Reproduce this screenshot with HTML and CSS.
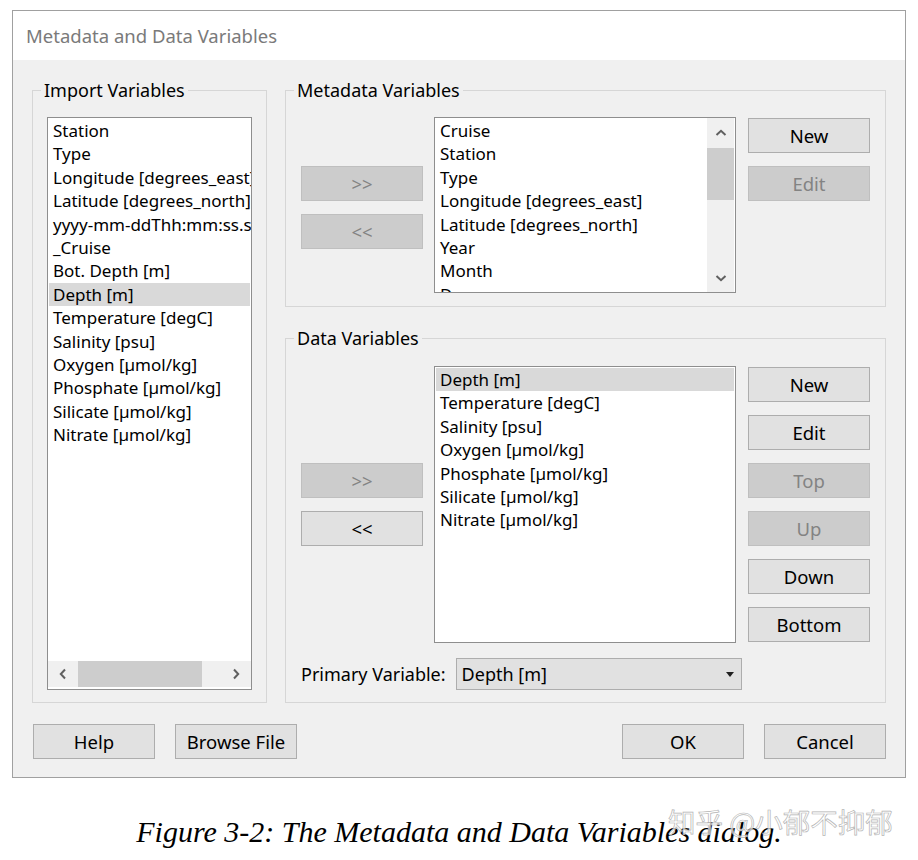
FILE: index.html
```html
<!DOCTYPE html>
<html lang="en">
<head>
  <meta charset="UTF-8">
  <meta name="viewport" content="width=device-width, initial-scale=1.0">
  <title>Metadata and Data Variables</title>
  <link rel="stylesheet" href="styles.css">
</head>
<body>
  <div class="dialog">
    <div class="titlebar">Metadata and Data Variables</div>
    <div class="dialog-body">
      <div class="main">
        <div class="group import-group">
          <span class="group-title">Import Variables</span>
          <div class="listbox import-list">
            <ul class="items">
              <li>Station</li>
              <li>Type</li>
              <li>Longitude [degrees_east]</li>
              <li>Latitude [degrees_north]</li>
              <li>yyyy-mm-ddThh:mm:ss.sss</li>
              <li>_Cruise</li>
              <li>Bot. Depth [m]</li>
              <li class="selected">Depth [m]</li>
              <li>Temperature [degC]</li>
              <li>Salinity [psu]</li>
              <li>Oxygen [µmol/kg]</li>
              <li>Phosphate [µmol/kg]</li>
              <li>Silicate [µmol/kg]</li>
              <li>Nitrate [µmol/kg]</li>
            </ul>
            <div class="hscroll">
              <span class="arrow-box">
                <svg width="8" height="12" viewBox="0 0 8 12"><path d="M6 1.5 L1.8 6 L6 10.5" fill="none" stroke="#606060" stroke-width="2"/></svg>
              </span>
              <span class="hthumb"></span>
              <span class="track-fill"></span>
              <span class="arrow-box">
                <svg width="8" height="12" viewBox="0 0 8 12"><path d="M2 1.5 L6.2 6 L2 10.5" fill="none" stroke="#606060" stroke-width="2"/></svg>
              </span>
            </div>
          </div>
        </div>

        <div class="right-col">
          <div class="group meta-group">
            <span class="group-title">Metadata Variables</span>
            <div class="transfer meta-transfer">
              <button class="btn" disabled>&gt;&gt;</button>
              <button class="btn" disabled>&lt;&lt;</button>
            </div>
            <div class="listbox meta-list">
              <ul class="items">
                <li>Cruise</li>
                <li>Station</li>
                <li>Type</li>
                <li>Longitude [degrees_east]</li>
                <li>Latitude [degrees_north]</li>
                <li>Year</li>
                <li>Month</li>
                <li>Day</li>
              </ul>
              <div class="vscroll">
                <span class="arrow-box">
                  <svg width="12" height="8" viewBox="0 0 12 8"><path d="M1.5 6 L6 1.8 L10.5 6" fill="none" stroke="#606060" stroke-width="2"/></svg>
                </span>
                <span class="vthumb"></span>
                <span class="track-fill"></span>
                <span class="arrow-box">
                  <svg width="12" height="8" viewBox="0 0 12 8"><path d="M1.5 2 L6 6.2 L10.5 2" fill="none" stroke="#606060" stroke-width="2"/></svg>
                </span>
              </div>
            </div>
            <div class="side-buttons">
              <button class="btn">New</button>
              <button class="btn" disabled>Edit</button>
            </div>
          </div>

          <div class="group data-group">
            <span class="group-title">Data Variables</span>
            <div class="data-row">
              <div class="transfer data-transfer">
                <button class="btn" disabled>&gt;&gt;</button>
                <button class="btn">&lt;&lt;</button>
              </div>
              <div class="listbox data-list">
                <ul class="items">
                  <li class="selected">Depth [m]</li>
                  <li>Temperature [degC]</li>
                  <li>Salinity [psu]</li>
                  <li>Oxygen [µmol/kg]</li>
                  <li>Phosphate [µmol/kg]</li>
                  <li>Silicate [µmol/kg]</li>
                  <li>Nitrate [µmol/kg]</li>
                </ul>
              </div>
              <div class="side-buttons">
                <button class="btn">New</button>
                <button class="btn">Edit</button>
                <button class="btn" disabled>Top</button>
                <button class="btn" disabled>Up</button>
                <button class="btn">Down</button>
                <button class="btn">Bottom</button>
              </div>
            </div>
            <div class="primary-row">
              <span class="primary-label">Primary Variable:</span>
              <div class="combo">
                <span>Depth [m]</span>
                <svg width="8" height="5" viewBox="0 0 8 5"><path d="M0 0 H8 L4 5 Z" fill="#202020"/></svg>
              </div>
            </div>
          </div>
        </div>
      </div>

      <div class="footer">
        <button class="btn help-btn">Help</button>
        <button class="btn">Browse File</button>
        <span class="spacer"></span>
        <button class="btn">OK</button>
        <button class="btn">Cancel</button>
      </div>
    </div>
  </div>

  <p class="caption">Figure 3-2: The Metadata and Data Variables dialog.<span class="watermark">知乎 @小郁不抑郁</span></p>
</body>
</html>
```

FILE: styles.css
```css
* {
  box-sizing: border-box;
}
body {
  margin: 0;
  background-color: #fff;
  font-family: "Noto Sans", "Open Sans", Arial, sans-serif;
  color: #000;
}
.dialog {
  width: 894px;
  height: 768px;
  margin: 10px 0 0 12px;
  border: 1px solid #a0a0a0;
  display: flex;
  flex-direction: column;
}
.titlebar {
  height: 49px;
  line-height: 49px;
  padding-left: 13px;
  background-color: #fff;
  color: #7a7a7a;
  font-size: 18.5px;
}
.dialog-body {
  flex: 1;
  background-color: #f0f0f0;
  padding: 30px 19px 0 19px;
}
.main {
  display: flex;
  gap: 18px;
}
.group {
  position: relative;
  border: 1px solid #d6d6d6;
}
.group-title {
  position: absolute;
  top: -13px;
  left: 8px;
  padding: 0 3px;
  background-color: #f0f0f0;
  font-size: 18px;
  line-height: 24px;
}
.import-group {
  width: 235px;
  height: 613px;
  padding: 26px 14px 12px;
}
.right-col {
  width: 601px;
  display: flex;
  flex-direction: column;
  gap: 31px;
}
.meta-group {
  height: 217px;
  padding: 26px 15px 13px;
  display: flex;
}
.data-group {
  height: 365px;
  padding: 27px 15px 12px;
}
.data-row {
  display: flex;
}

/* buttons */
.btn {
  width: 122px;
  height: 35px;
  padding: 0;
  background-color: #e1e1e1;
  border: 1px solid #adadad;
  font-family: inherit;
  font-size: 18.5px;
  color: #000;
}
.btn:disabled {
  background-color: #cccccc;
  border-color: #bfbfbf;
  color: #838383;
}
.transfer {
  display: flex;
  flex-direction: column;
  gap: 13px;
  margin-right: 11px;
}
.meta-transfer {
  padding-top: 49px;
}
.data-transfer {
  padding-top: 97px;
}
.side-buttons {
  display: flex;
  flex-direction: column;
  gap: 13px;
  margin-left: 12px;
  padding-top: 1px;
}

/* list boxes */
.listbox {
  background-color: #fff;
  border: 1px solid #8e8e8e;
  display: flex;
  overflow: hidden;
}
.import-list {
  width: 205px;
  height: 573px;
  flex-direction: column;
}
.meta-list {
  width: 302px;
  height: 176px;
}
.data-list {
  width: 302px;
  height: 277px;
}
.items {
  list-style: none;
  margin: 0;
  padding: 1px 0 0;
  flex: 1;
  min-width: 0;
  overflow: hidden;
}
.items li {
  height: 23.4px;
  line-height: 23.4px;
  margin: 0 1px;
  padding-left: 4px;
  white-space: nowrap;
  font-size: 17px;
}
.items li.selected {
  background-color: #d9d9d9;
}

/* scrollbars */
.hscroll {
  height: 26px;
  margin-bottom: 2px;
  background-color: #f0f0f0;
  display: flex;
}
.hscroll .arrow-box {
  width: 30px;
}
.hthumb {
  width: 124px;
  background-color: #cdcdcd;
}
.track-fill {
  flex: 1;
}
.arrow-box {
  display: flex;
  align-items: center;
  justify-content: center;
}
.vscroll {
  width: 27px;
  margin-right: 1px;
  background-color: #f0f0f0;
  display: flex;
  flex-direction: column;
}
.vscroll .arrow-box {
  height: 29px;
}
.vthumb {
  height: 52px;
  margin-top: 1px;
  background-color: #cdcdcd;
}

/* primary variable */
.primary-row {
  display: flex;
  align-items: center;
  margin-top: 15px;
}
.primary-label {
  font-size: 18px;
  margin-right: 10px;
}
.combo {
  width: 286px;
  height: 32px;
  background-color: #e1e1e1;
  border: 1px solid #adadad;
  display: flex;
  align-items: center;
  justify-content: space-between;
  padding: 0 7px 0 5px;
  font-size: 18px;
}

/* bottom buttons */
.footer {
  display: flex;
  gap: 20px;
  padding-top: 21px;
}
.help-btn {
  margin-left: 1px;
}
.spacer {
  flex: 1;
}

/* caption */
.caption {
  position: relative;
  margin: 36px 0 0;
  text-align: center;
  font-family: "Liberation Serif", "Times New Roman", serif;
  font-style: italic;
  font-size: 30px;
  line-height: 36px;
}
.watermark {
  position: absolute;
  left: 668px;
  top: -10px;
  font-family: "Noto Sans CJK SC", sans-serif;
  font-style: normal;
  font-size: 27.5px;
  line-height: 34px;
  color: rgba(255, 255, 255, 0.7);
  -webkit-text-stroke: 0.7px #b4b4b4;
  white-space: nowrap;
}
```
